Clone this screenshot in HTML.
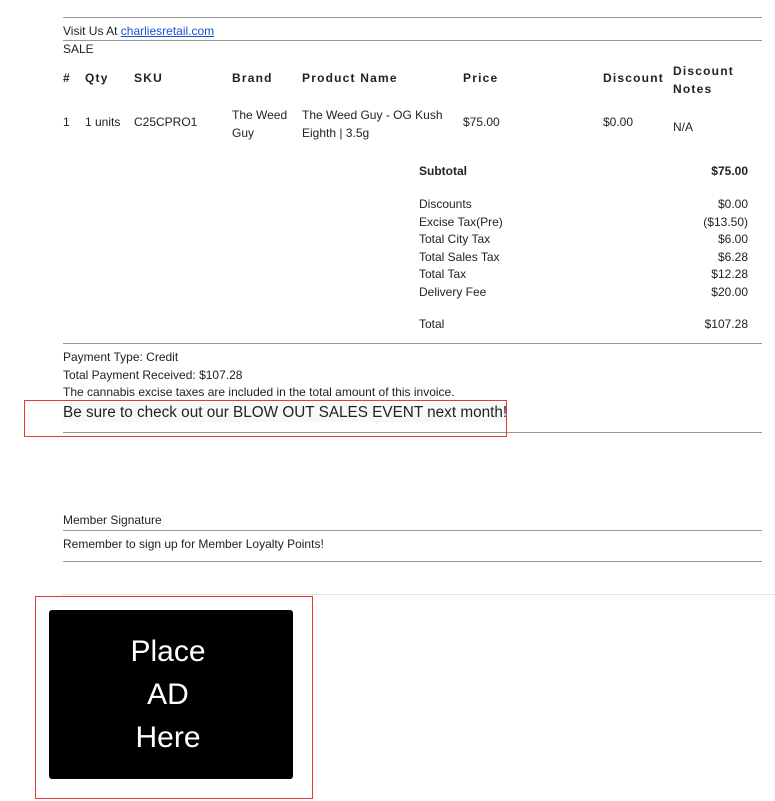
<!DOCTYPE html>
<html><head><meta charset="utf-8"><style>
body{margin:0;width:775px;height:801px;background:#fff;font-family:"Liberation Sans",sans-serif;font-size:12px;color:#222;position:relative;overflow:hidden}
.a{position:absolute;white-space:nowrap}
.hr{position:absolute;left:63px;width:699px;height:0;border-top:1px solid #999}
.h{font-weight:bold;letter-spacing:1.2px;font-size:12px;color:#222}
.r{text-align:right}
</style></head><body>
<div class="hr" style="top:17px"></div>
<div class="a" style="left:63px;top:24px">Visit Us At <span style="color:#1a4fd6;text-decoration:underline">charliesretail.com</span></div>
<div class="hr" style="top:40px"></div>
<div class="a" style="left:63px;top:42px">SALE</div>

<div class="a h" style="left:63px;top:71px">#</div>
<div class="a h" style="left:85px;top:71px">Qty</div>
<div class="a h" style="left:134px;top:71px">SKU</div>
<div class="a h" style="left:232px;top:71px">Brand</div>
<div class="a h" style="left:302px;top:71px">Product Name</div>
<div class="a h" style="left:463px;top:71px">Price</div>
<div class="a h" style="left:603px;top:71px">Discount</div>
<div class="a h" style="left:673px;top:62px;line-height:18px">Discount<br>Notes</div>

<div class="a" style="left:63px;top:115px">1</div>
<div class="a" style="left:85px;top:115px">1 units</div>
<div class="a" style="left:134px;top:115px">C25CPRO1</div>
<div class="a" style="left:232px;top:106px;line-height:18px">The Weed<br>Guy</div>
<div class="a" style="left:302px;top:106px;line-height:18px">The Weed Guy - OG Kush<br>Eighth | 3.5g</div>
<div class="a" style="left:463px;top:115px">$75.00</div>
<div class="a" style="left:603px;top:115px">$0.00</div>
<div class="a" style="left:673px;top:120px">N/A</div>

<div class="a" style="left:419px;top:164px;font-weight:bold">Subtotal</div>
<div class="a r" style="right:27px;top:164px;font-weight:bold">$75.00</div>
<div class="a" style="left:419px;top:196px;line-height:17.5px">Discounts<br>Excise Tax(Pre)<br>Total City Tax<br>Total Sales Tax<br>Total Tax<br>Delivery Fee</div>
<div class="a r" style="right:27px;top:196px;line-height:17.5px">$0.00<br>($13.50)<br>$6.00<br>$6.28<br>$12.28<br>$20.00</div>
<div class="a" style="left:419px;top:317px">Total</div>
<div class="a r" style="right:27px;top:317px">$107.28</div>

<div class="hr" style="top:343px"></div>
<div class="a" style="left:63px;top:349px;line-height:17.5px">Payment Type: Credit<br>Total Payment Received: $107.28<br>The cannabis excise taxes are included in the total amount of this invoice.</div>
<div class="a" style="left:63px;top:404px;font-size:15.3px;background:#f8f8fa">Be sure to check out our BLOW OUT SALES EVENT next month!</div>
<div class="hr" style="top:432px"></div>
<div class="a" style="left:24px;top:400px;width:481px;height:35px;border:1px solid #e53935"></div>

<div class="a" style="left:63px;top:513px">Member Signature</div>
<div class="hr" style="top:530px"></div>
<div class="a" style="left:63px;top:537px">Remember to sign up for Member Loyalty Points!</div>
<div class="hr" style="top:561px"></div>
<div class="a" style="left:63px;top:594px;width:712px;border-top:1px dotted #ccc"></div>

<div class="a" style="left:35px;top:596px;width:276px;height:201px;border:1px solid #e53935"></div>
<div class="a" style="left:49px;top:610px;width:244px;height:169px;background:#000;border-radius:3px;color:#fff;font-size:30px;line-height:43px;text-align:center;padding-top:20px;padding-right:6px;box-sizing:border-box;white-space:normal">Place<br>AD<br>Here</div>
</body></html>
